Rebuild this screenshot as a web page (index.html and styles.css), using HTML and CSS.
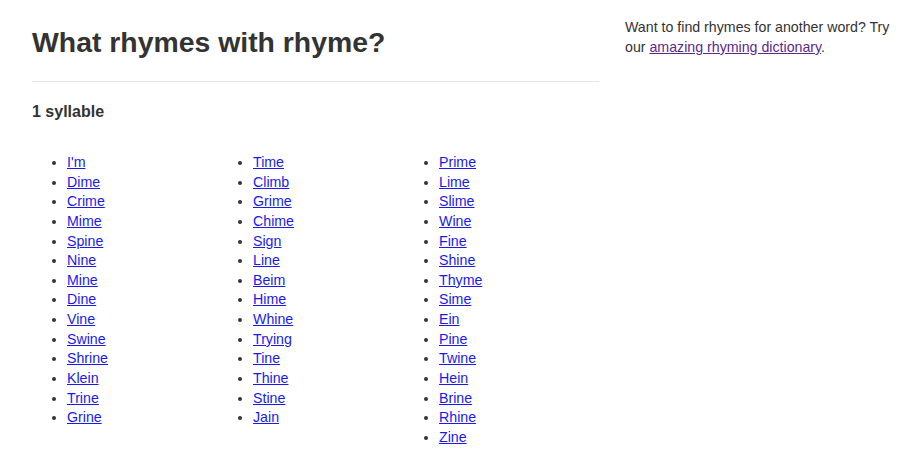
FILE: index.html
```html
<!DOCTYPE html>
<html lang="en">
<head>
<meta charset="utf-8">
<title>What rhymes with rhyme?</title>
<link rel="stylesheet" href="styles.css">
</head>
<body>
<div class="page">
  <main class="main">
    <h1 class="title">What rhymes with rhyme?</h1>
    <hr class="rule">
    <h2 class="group">1 syllable</h2>
    <div class="cols">
      <ul class="words">
        <li><a href="#">I'm</a></li>
        <li><a href="#">Dime</a></li>
        <li><a href="#">Crime</a></li>
        <li><a href="#">Mime</a></li>
        <li><a href="#">Spine</a></li>
        <li><a href="#">Nine</a></li>
        <li><a href="#">Mine</a></li>
        <li><a href="#">Dine</a></li>
        <li><a href="#">Vine</a></li>
        <li><a href="#">Swine</a></li>
        <li><a href="#">Shrine</a></li>
        <li><a href="#">Klein</a></li>
        <li><a href="#">Trine</a></li>
        <li><a href="#">Grine</a></li>
      </ul>
      <ul class="words">
        <li><a href="#">Time</a></li>
        <li><a href="#">Climb</a></li>
        <li><a href="#">Grime</a></li>
        <li><a href="#">Chime</a></li>
        <li><a href="#">Sign</a></li>
        <li><a href="#">Line</a></li>
        <li><a href="#">Beim</a></li>
        <li><a href="#">Hime</a></li>
        <li><a href="#">Whine</a></li>
        <li><a href="#">Trying</a></li>
        <li><a href="#">Tine</a></li>
        <li><a href="#">Thine</a></li>
        <li><a href="#">Stine</a></li>
        <li><a href="#">Jain</a></li>
      </ul>
      <ul class="words">
        <li><a href="#">Prime</a></li>
        <li><a href="#">Lime</a></li>
        <li><a href="#">Slime</a></li>
        <li><a href="#">Wine</a></li>
        <li><a href="#">Fine</a></li>
        <li><a href="#">Shine</a></li>
        <li><a href="#">Thyme</a></li>
        <li><a href="#">Sime</a></li>
        <li><a href="#">Ein</a></li>
        <li><a href="#">Pine</a></li>
        <li><a href="#">Twine</a></li>
        <li><a href="#">Hein</a></li>
        <li><a href="#">Brine</a></li>
        <li><a href="#">Rhine</a></li>
        <li><a href="#">Zine</a></li>
      </ul>
    </div>
  </main>
  <aside class="side">
    <p class="note">Want to find rhymes for another word? Try our <a class="visited" href="#">amazing rhyming dictionary</a>.</p>
  </aside>
</div>
</body>
</html>
```

FILE: styles.css
```css
html, body {
  margin: 0;
  padding: 0;
  background: #ffffff;
}
body {
  font-family: "Liberation Sans", Arial, Helvetica, sans-serif;
  color: #333333;
  font-size: 14px;
}
.page {
  display: flex;
  align-items: flex-start;
  padding-left: 32px;
  gap: 26px;
}
.main {
  width: 567px;
  flex: none;
}
.title {
  margin: 25px 0 22px;
  font-size: 28.4px;
  line-height: 34px;
  font-weight: bold;
  color: #333333;
}
.rule {
  margin: 0;
  border: 0;
  border-top: 1px solid #e6e6ea;
  height: 0;
}
.group {
  margin: 20px 0 0;
  font-size: 16px;
  line-height: 20px;
  font-weight: bold;
  color: #333333;
}
.cols {
  display: grid;
  grid-template-columns: 186px 186px 186px;
  padding-left: 35px;
  margin-top: 31px;
}
.words {
  margin: 0;
  padding: 0;
  list-style: disc outside;
  line-height: 19.64px;
  font-size: 14.2px;
}
.words a {
  color: #1a1aee;
}
.side {
  width: 274px;
  flex: none;
}
.note {
  margin: 17px 0 0;
  line-height: 20px;
  font-size: 14.2px;
  color: #333333;
}
.note .visited {
  color: #5b2a8c;
}
```
